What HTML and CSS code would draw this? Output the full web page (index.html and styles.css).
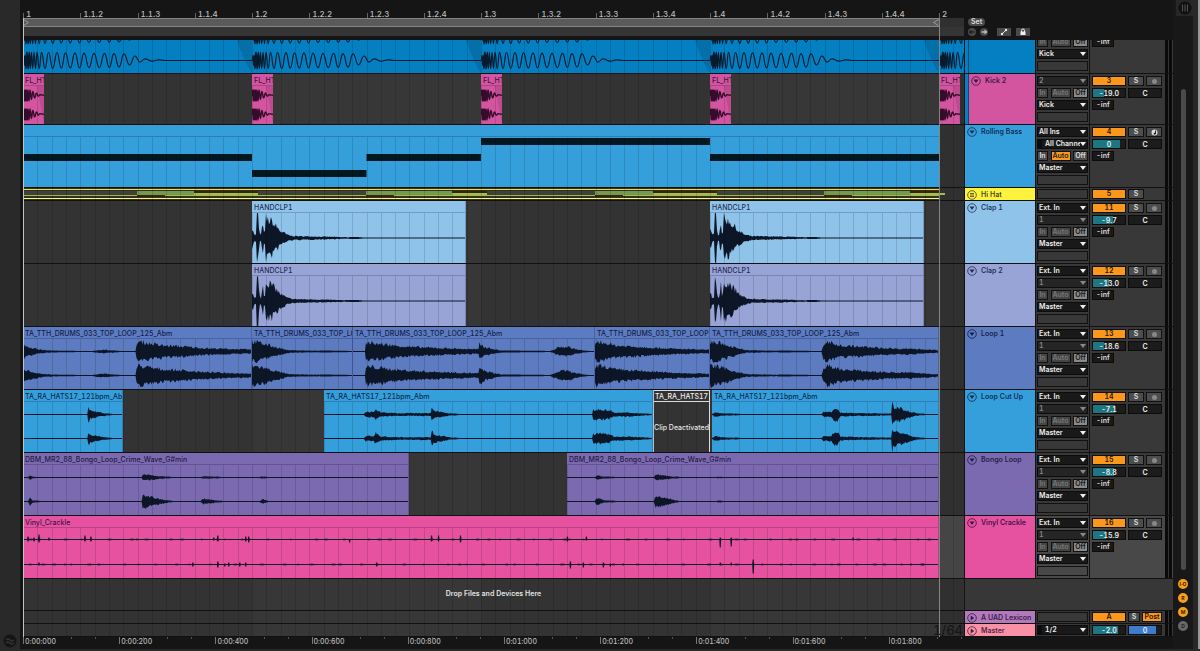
FILE: index.html
```html
<!DOCTYPE html>
<html lang="en">
<head>
<meta charset="utf-8">
<title>Arrangement View</title>
<link rel="stylesheet" href="styles.css">
</head>
<body>
<div class="app">
  <aside class="rail">
    <button class="rail-btn" aria-label="Show overview">
      <svg viewBox="0 0 14 14"><circle cx="7" cy="7" r="6.5" fill="#151515"/><path d="M3 6q2-2 4 0t4 0M3 9q2-2 4 0t4 0" fill="none" stroke="#333" stroke-width="1.2"/></svg>
    </button>
  </aside>

  <main class="arrange">
    <header class="top">
      <div class="top-time">
        <div class="bars" id="bars"></div>
        <div class="loop">
          <div class="loop-brace">
            <svg viewBox="0 0 6 7"><path d="M.5.5 5.500 3.500.5 6.500" fill="none" stroke="#999"/></svg>
            <svg viewBox="0 0 6 7"><path d="M5.500.5.5 3.500 5.500 6.500" fill="none" stroke="#999"/></svg>
          </div>
        </div>
        <div class="scrub"></div>
      </div>
      <div class="locators">
        <button class="set">Set</button>
        <div class="locator-row">
          <button class="round" aria-label="Previous locator"><svg viewBox="0 0 8 8"><circle cx="4" cy="4" r="4" fill="#4a4a4a"/><path d="M6.500 4h-5M3.500 2l-2 2 2 2" fill="none" stroke="#111"/></svg></button>
          <button class="round" aria-label="Next locator"><svg viewBox="0 0 8 8"><circle cx="4" cy="4" r="4" fill="#4a4a4a"/><path d="M1.500 4h5M4.500 2l2 2-2 2" fill="none" stroke="#eee"/></svg></button>
          <button class="flat" aria-label="Automation mode"><svg viewBox="0 0 14 8"><path d="M5 6 9 2" stroke="#eee"/><circle cx="5" cy="6" r="1.200" fill="#eee"/><circle cx="9" cy="2" r="1.200" fill="#eee"/></svg></button>
          <button class="flat" aria-label="Lock envelopes"><svg viewBox="0 0 14 8"><rect x="4.500" y="3.500" width="5" height="3.500" fill="#eee"/><path d="M5.500 4V2.500a1.500 1.500 0 0 1 3 0V4" fill="none" stroke="#eee"/></svg></button>
        </div>
      </div>
    </header>
    <section class="tracks" id="tracks" aria-label="Tracks"></section>
    <footer class="times" id="times"></footer>
    <div class="markers"><i class="marker start"></i><i class="marker end"></i><b class="grid-size">1/64</b></div>
  </main>

  <aside class="gutter">
    <button class="corner" aria-label="Session view"><svg viewBox="0 0 14 14"><circle cx="7" cy="7" r="6.500" fill="#111"/><path d="M4.500 3.500v7M7 3.500v7M9.500 3.500v7" stroke="#555"/></svg></button>
    <div class="scroll"></div>
    <button class="dot">I·O</button>
    <button class="dot">R</button>
    <button class="dot">M</button>
    <button class="dot off">D</button>
  </aside>
  <div class="bezel"></div>
</div>
<script src="app.js"></script>
</body>
</html>
```

FILE: styles.css
```css
:root {
  --beat: 24.336%;
  --step: 1.521%;
  --line: #111;
  --panel: #383838;
  --orange: #fb981c;
  --side: 209px;
}
* { box-sizing: border-box; }
body {
  margin: 0;
  background: #151515;
  color: #ddd;
  font: 600 7px/9px Inter, "Liberation Sans", sans-serif;
  font-variant-numeric: tabular-nums;
}
button, input, select { font: inherit; font-variant-numeric: inherit; color: inherit; margin: 0; padding: 0; border: 0; border-radius: 0; }
svg { display: block; }

.app {
  display: grid;
  grid-template-columns: 20px minmax(0, 1fr) 20px 7px;
  min-height: 100vh;
  border-bottom: 2px solid #292929;
}
.rail { background: #292929; display: flex; align-items: flex-end; padding: 0 3px 1px; }
.rail-btn { width: 14px; height: 14px; background: none; }
.bezel { background: #282828; border-right: 2px solid #999; }
.arrange { position: relative; padding-left: 3px; }

/* Header */
.top { display: grid; grid-template-columns: minmax(0, 1fr) var(--side); height: 40px; }
.bars { display: flex; height: 18px; padding-top: 9px; overflow: hidden; color: #bbb; font-size: 8px; font-weight: 500; line-height: 10px; }
.bars span {
  flex: none;
  width: calc(var(--beat) / 4);
  padding-left: 3px;
  background: linear-gradient(#666, #666) 0 100% / 1px 5px no-repeat;
}
.loop { height: 9px; background: #303030; }
.loop-brace {
  width: calc(var(--beat) * 4);
  height: 9px;
  display: flex;
  justify-content: space-between;
  background: #5a5a5a;
  border: solid #858585;
  border-width: 1px 0;
}
.loop-brace svg { width: 6px; height: 7px; }
.scrub { height: 9px; background: #353535; }
.locators { padding: 18px 0 0 4px; display: flex; flex-direction: column; align-items: flex-start; gap: 1px; }
.set { height: 8px; line-height: 8px; padding: 0 3px; border-radius: 4px; background: #4c4c4c; color: #ddd; }
.locator-row { display: flex; gap: 4px; align-items: center; height: 10px; }
.round { width: 8px; height: 8px; background: none; }
.flat { width: 14px; height: 8px; background: #4a4a4a; margin-left: 1px; }
.round + .flat { margin-left: 5px; }

/* Track rows */
.track {
  display: grid;
  grid-template-columns: minmax(0, 1fr) 70px 53px 83px;
  column-gap: 1px;
  height: 63px;
  border-bottom: 1px solid var(--line);
  background: var(--line);
  overflow: hidden;
}
.track.h-clipped { height: 34px; }
.track.h-mid { height: 51px; }
.track.h-thin { height: 13px; }
.drop { display: grid; grid-template-columns: minmax(0, 1fr) 208px; column-gap: 1px; height: 32px; border-bottom: 1px solid var(--line); }
.drop-side { background: #373737; }
.lane {
  position: relative;
  overflow: hidden;
  background: linear-gradient(90deg, #333 0 var(--beat), #373737 0 calc(var(--beat) * 2), #333 0 calc(var(--beat) * 3), #373737 0 calc(var(--beat) * 4), #303030 0);
}
.lane::after {
  content: "";
  position: absolute;
  inset: 0;
  z-index: 1;
  pointer-events: none;
  background: repeating-linear-gradient(90deg, rgba(0, 0, 0, .14) 0 1px, transparent 1px var(--step));
}
.selected .lane { background: #454545; }
.drop .lane { display: grid; place-items: center; padding-bottom: 2px; color: #e4e4e4; }

/* Clips */
.clip {
  position: absolute;
  top: 0;
  bottom: 0;
  left: calc(var(--x) / 941 * 100%);
  width: calc(var(--w) / 941 * 100%);
  display: flex;
  flex-direction: column;
  overflow: hidden;
  background: var(--color);
  border-right: 1px solid rgba(0, 0, 60, .2);
}
.clip-title {
  position: relative;
  z-index: 2;
  flex: none;
  height: 12px;
  line-height: 13px;
  padding-left: 2px;
  overflow: hidden;
  white-space: nowrap;
  font-weight: 500;
  color: rgba(0, 0, 30, .78);
  background: var(--color);
  border-bottom: 1px solid rgba(0, 0, 50, .2);
}
.wave { flex: 1; width: 100%; min-height: 0; fill: var(--ink, #0c1626); }
.bare .clip, .notes .clip { border: 0; }
.hats .clip { background: none; }
.clip.deactivated { background: #333; border: 1px solid #ddd; border-bottom: 0; }
.deactivated .clip-title { background: #333; color: #eee; border-color: #ddd; height: 11px; line-height: 11px; padding-left: 1px; }
.deactivated p { position: relative; z-index: 2; margin: auto -3px; text-align: center; white-space: nowrap; font-weight: 500; color: #e4e4e4; }

/* Track header */
.head { display: flex; align-items: flex-start; gap: 4px; padding: 1px 0 0 2px; background: var(--color); color: rgba(0, 0, 30, .75); white-space: nowrap; overflow: hidden; }
.head .name { line-height: 11px; }
.nested .head { border-left: 3px solid #0480c2; box-shadow: inset 1px 0 #0a4a75; padding-left: 3px; }
.fold { width: 10px; height: 11px; background: none; }
.fold svg { width: 10px; height: 10px; fill: none; stroke: currentColor; }
.fold .solid { fill: currentColor; stroke: none; }

/* Routing and mixer */
.io, .mix { background: var(--panel); padding: 2px 1px; display: flex; flex-direction: column; gap: 2px; overflow: hidden; }
.selected .io, .selected .mix { background: #484848; }
.h-clipped .io, .h-clipped .mix-cols { justify-content: flex-end; }
.h-thin .io { padding: 1px; }
.pick { display: block; position: relative; flex: none; height: 10px; background: #191919; border: 1px solid #0c0c0c; }
.pick select { display: block; width: 100%; height: 8px; line-height: 8px; padding: 0 7px 0 1px; appearance: none; background: none; outline: none; color: #eee; overflow: hidden; }
.pick::after { content: ""; position: absolute; right: 1px; top: 2px; border: solid transparent; border-width: 4px 3px 0; border-top-color: #eee; }
.pick.dim { background: #252525; }
.pick.dim select { color: #888; }
.pick.dim::after { border-top-color: #888; }
.pick.indent { border-left-width: 5px; }
.pick.indent select { padding-left: 3px; }
.slot { flex: none; height: 10px; border: 1px solid var(--line); }
.monitor { flex: none; display: grid; grid-template-columns: 11px 20px 15px; justify-content: space-between; height: 10px; }
.monitor button, .mix button { height: 10px; line-height: 8px; border: 1px solid var(--line); background: #4d4d4d; color: #ddd; text-align: center; overflow: hidden; white-space: nowrap; }
.monitor.dim button { background: #454545; color: #777; }
.monitor.dim .off { background: #8a8a8a; color: #151515; }
.monitor .on, .monitor.dim .on { background: var(--orange); color: #222; }
.mix { flex-direction: row; justify-content: space-between; padding: 0 1px 0 2px; }
.mix-cols { display: flex; flex-direction: column; gap: 2px; padding-top: 2px; }
.h-thin .mix-cols { padding-top: 1px; }
.mix-row { flex: none; display: grid; grid-template-columns: 34px 16px 16px; column-gap: 2px; height: 10px; }
.mix-row.return { grid-template-columns: 34px 12px 20px; }
.mix .num, .mix .post { background: var(--orange); color: #1a1206; }
.mix .rec { display: grid; place-items: center; color: #888; }
.rec svg { width: 7px; height: 7px; }
.value { height: 10px; width: 100%; border: 1px solid #0c0c0c; text-align: center; color: #eee; background: linear-gradient(90deg, var(--tint, #1f7683) var(--fill, 0%), #1c1c1c 0); outline: none; }
.value.pan { grid-column: span 2; }
.value.blue { --tint: #3e7ccb; }
.peak { flex: none; width: 22px; height: 10px; line-height: 8px; border: 1px solid #0c0c0c; background: #191919; text-align: center; color: #ddd; }
.h-clipped .mix-cols { padding-bottom: 26px; }
.meter { width: 7px; border-left: 3px solid #0a0a0a; border-right: 3px solid #0a0a0a; background: #333; }

/* Time ruler */
.times { display: flex; height: 12px; width: calc(100% - var(--side)); overflow: hidden; color: #bbb; }
.times span {
  flex: none;
  width: 10.223%;
  padding-left: 2px;
  line-height: 10px;
  font-weight: 500;
  background:
    linear-gradient(#777, #777) 0 0 / 1px 7px no-repeat,
    repeating-linear-gradient(90deg, #555 0 1px, transparent 1px 25%) 0 0 / 100% 2px no-repeat;
}
.markers { position: absolute; top: 18px; left: 3px; right: var(--side); height: 619px; pointer-events: none; z-index: 3; }
.marker { position: absolute; top: 0; bottom: 0; width: 1px; background: #b9c4c8; }
.marker.start { left: 0; }
.marker.end { left: calc(var(--beat) * 4); background: #858585; }
.grid-size { position: absolute; right: 1px; bottom: 0; font-size: 13px; line-height: 14px; font-weight: 500; color: #161616; }

/* Right gutter */
.gutter { display: flex; flex-direction: column; align-items: center; gap: 3px; background: #181818; padding-bottom: 17px; }
.corner { align-self: flex-end; width: 17px; height: 16px; padding: 0 2px; background: #272727; }
.corner svg { width: 14px; height: 14px; }
.scroll { width: 5px; flex: 1; margin: 70px 0 6px; border-radius: 3px; background: #4a4a4a; }
.dot { width: 10px; height: 10px; margin-bottom: 1px; border-radius: 5px; background: #f9a01b; color: #332000; font-size: 5px; line-height: 10px; font-weight: 700; text-align: center; }
.dot.off { background: #686868; color: #222; }
```

FILE: app.js
```js
// Timeline units: 941 wide in total, one beat is 229 units.
const BEAT = 229;

let seed = 7;
function rand() {
  seed = (seed * 16807) % 2147483647;
  return seed / 2147483647;
}

// Amplitude of an envelope [[x, amp], ...] at position x.
function ampAt(env, x) {
  for (let i = 1; i < env.length; i++) {
    if (x <= env[i][0]) {
      const [x0, a0] = env[i - 1], [x1, a1] = env[i];
      return a0 + (a1 - a0) * (x - x0) / (x1 - x0 || 1);
    }
  }
  return env[env.length - 1][1];
}

function shape(env, cy, width) {
  const up = [], down = [];
  for (let x = 0; x <= width; x += 1) {
    const a = ampAt(env, x);
    const noisy = v => Math.max(0.5, v > 1 ? v * (0.58 + 0.4 * Math.pow(rand(), 1.6)) : v);
    up.push(`${x} ${(cy - noisy(a)).toFixed(1)}`);
    down.unshift(`${x} ${(cy + noisy(a)).toFixed(1)}`);
  }
  return `<path d="M${up.join("L")}L${down.join("L")}Z"/>`;
}

function svg(width, height, body) {
  return `<svg class="wave" viewBox="0 0 ${width} ${height}" preserveAspectRatio="none" aria-hidden="true">${body}</svg>`;
}

function clip(x, w, title, body) {
  const head = title ? `<div class="clip-title">${title}</div>` : "";
  return `<div class="clip" style="--x:${x};--w:${w}">${head}${body}</div>`;
}

function stereo(x, w, title, env, lower) {
  return clip(x, w, title, svg(w, 50, shape(env, 12.5, w) + shape(lower || env, 36.5, w)));
}

// Oscillating line through alternating peaks.
function swing(peaks, amp, cy, end) {
  let d = `M0 ${cy}`, px = 0, py = cy;
  const go = (x, y) => {
    const m = (px + x) / 2;
    d += `C${m} ${py} ${m} ${y} ${x} ${y}`;
    px = x; py = y;
  };
  peaks.forEach((p, i) => {
    const a = amp(p);
    if (i) go((peaks[i - 1] + p) / 2, cy + a);
    go(p, cy - a);
  });
  go(px + 6, cy);
  return d + `H${end}`;
}

function kick(x, w) {
  const peaks = [1, 2.2, 3.4, 4.8, 6.4, 8.4, 11, 14, 18.5, 25.5, 34, 42.5, 52, 61, 71, 81.5, 91, 101, 112, 122, 136];
  const amp = p => p < 3 ? 5 : p < 106 ? 8.4 - p / 60 : p < 115 ? 4.5 : p < 125 ? 1.6 : .6;
  const line = cy => `<path d="${swing(peaks, amp, cy, BEAT)}" fill="none" stroke="#061c2e" stroke-width="1.2"/>`;
  const fade = `<path d="M214 0H229V33Q222 24 214 0Z" fill="#056fa9"/>`;
  return clip(x, w, "", svg(w, 33, fade + line(-4.5) + line(20.5)));
}

function kick2(x) {
  const peaks = [.8, 1.8, 2.8, 3.8, 5, 7, 9.8, 13.5, 17];
  const amp = p => p < 8 ? 5.5 : p < 11 ? 4 : p < 14 ? 2.5 : .7;
  const line = cy => `<path d="${swing(peaks, amp, cy, 21)}" fill="none" stroke="#350c2c" stroke-width="1.4"/>`;
  return clip(x, 21, "FL_HTH", svg(21, 38, `<path d="M14 0h7v38z" fill="#c04a90"/>` + line(9.5) + line(28.5)));
}

function bass() {
  const notes = [[0, 1, 17], [1, .5, 33], [1.5, .5, 17], [2, 1, 1], [3, 1, 17]];
  return clip(0, 916, "&nbsp;", svg(916, 50, notes.map(([s, l, y]) =>
    `<rect x="${s * BEAT}" y="${y}" width="${l * BEAT}" height="7" fill="#02171f"/>`).join("")));
}

function hats() {
  let s = `<path d="M0 0h916v12H0z" fill="#33321f"/><path d="M0 3h916v4H0z" fill="#40403a"/>
    <path d="M0 1h916v1H0z" fill="#eadb5c"/><path d="M0 7h916v1H0z" fill="#9fb94c"/><path d="M0 10h916v1H0z" fill="#fbf48a"/>`;
  [[114, 57], [343, 86], [572, 58], [801, 86]].forEach(([x, w], i) => {
    const tail = [235, 464, 694, 922][i];
    s += `<rect x="${x}" y="3" width="${w}" height="4" fill="#739a50"/>
      <rect x="${x + w}" y="3" width="${Math.min(916, tail) - x - w}" height="2" fill="#3b2509"/>
      <rect x="${x + w}" y="5" width="${tail - x - w}" height="2" fill="#a5bd50"/>
      <rect x="${x}" y="7" width="28" height="2" fill="#3b2509"/>`;
  });
  return clip(0, 941, "", svg(941, 12, s));
}

const CLAP = [[0, 12], [1.4, 12], [2.2, 3], [4, 5], [4.6, 32], [6, 30], [7.500, 6], [9.5, 4], [10.8, 24], [12, 7], [13.2, 9], [14, 26], [17, 23], [20, 22], [22, 18], [25, 15], [28, 10], [31, 7.5], [36, 4], [42, 2.5], [55, 2.2], [75, 1.7], [92, 1.1], [110, .8], [112, .5], [214, .5]];
const clap = x => clip(x, 214, "HANDCLP1", svg(214, 50, shape(CLAP, 25, 214)));

const LOOP = "TA_TTH_DRUMS_033_TOP_LOOP_125_Abm";
const HATS = "TA_RA_HATS17_121bpm_Abm";
const BONGO = "DBM_MR2_88_Bongo_Loop_Crime_Wave_G#min";

function loops() {
  const hit = [[0, 13], [6, 12], [13, 10], [20, 7], [30, 4], [36, 1.8], [60, 1.1]];
  return stereo(0, 229, LOOP, [[0, 9], [3, 7], [10, 4.5], [20, 2], [35, .8], [70, .5], [77, 2.2], [85, 2], [97, .6], [113, .5], [114, 10], [116, 13], [125, 11], [140, 8], [163, 6.5], [180, 4.5], [228, 2.6]])
    + stereo(229, 101, LOOP, [...hit, [101, .6]])
    + stereo(330, 242, LOOP, [[0, .5], [12, .5], [13, 10], [15, 12], [27, 10], [40, 8], [60, 6], [78, 5], [100, 4], [126, 2.8], [127, 11], [132, 6], [142, 3], [150, 1], [198, .6], [208, 6], [216, 6], [224, 3], [234, .7], [242, .5]])
    + stereo(572, 115, LOOP, [[0, 11], [3, 13], [12, 11], [20, 8], [40, 6.5], [60, 5], [80, 3.6], [114, 2.2]])
    + stereo(687, 229, LOOP, [...hit, [112, .5], [114, 9], [117, 13], [130, 8], [160, 5.5], [190, 3.6], [200, 4], [228, 1.8]]);
}

function cutUps() {
  return stereo(0, 100, HATS, [[0, .5], [65, .5], [66, 9], [68, 5], [76, 3], [84, 1.5], [90, .5]])
    + stereo(301, 329, HATS, [[0, .5], [40, .5], [42, 3.5], [50, 3.5], [52, 7], [57, 2.5], [75, 1.8], [107, 1.8], [108, 10], [111, 5], [120, 3], [126, 1.5], [135, .6], [269, .5], [270, 6], [277, 6.500], [286, 5.5], [291, 2.4], [306, 2.4], [320, 1.4], [329, .5]])
    + `<div class="clip deactivated" style="--x:630;--w:57"><div class="clip-title">TA_RA_HATS17</div><p>Clip Deactivated</p></div>`
    + stereo(689, 227, HATS, [[0, .5], [3, 2.5], [5, 3], [8, 1.8], [20, 1.2], [30, .5], [110, .5], [112, 3], [120, 3.5], [123, 9], [126, 8], [129, 2.4], [150, 1.8], [178, 1.2], [180, 1.2], [181, 15], [183, 9], [192, 7], [198, 4], [205, 1.8], [215, .5]]);
}

function bongos() {
  return stereo(0, 386, BONGO,
    [[0, .5], [5, .5], [7, 2.8], [10, .8], [15, .5], [119, .5], [120, 4], [128, 3.5], [136, 1.8], [150, .5], [178, .5], [182, 1.8], [200, .5], [237, .5], [240, 1.2], [246, .5]],
    [[0, .5], [5, .5], [7, 5], [10, 1.4], [18, .5], [119, .5], [120, 9], [128, 6], [136, 3.5], [150, .5], [178, .5], [181, 3.6], [200, .6], [237, .5], [240, 3], [246, .5]])
    + stereo(544, 372, BONGO,
    [[0, .5], [28, .5], [30, 3], [36, 1.2], [50, .5], [87, .5], [89, 3.8], [98, 2.4], [114, .5], [150, .5], [152, 1.2], [156, .5]],
    [[0, .5], [28, .5], [30, 5], [36, 1.8], [50, .5], [87, .5], [89, 7.500], [98, 5], [112, .6], [150, .5], [152, 1.6], [156, .5]]);
}

function crackle() {
  const top = [[5, 3, 2], [11, 2, 2], [16, 5, 3], [26, 2, 1], [62, 4, 2], [68, 3, 2], [191, 2, 1], [195, 4, 2], [223, 3, 2], [226, 3, 3], [327, 0, 3], [409, 4, 2], [416, 4, 2], [438, 4, 3], [545, 3, 2], [564, 3, 1], [698, 2, 8], [709, 2, 7], [831, 2, 1]];
  const low = [[16, 2, 1], [170, 2, 2], [195, 3, 3], [202, 1, 2], [206, 2, 2], [217, 2, 2], [223, 2, 2], [354, 2, 2], [548, 3, 4], [561, 2, 3], [581, 2, 3], [588, 1, 2], [601, 1, 1], [698, 2, 1], [709, 2, 1], [731, 5, 9], [889, 1, 1], [901, 1, 1]];
  const line = (cy, spikes) => {
    let s = `<rect y="${cy - .5}" width="916" height="1"/>`;
    for (let x = 6; x < 910; x += 5 + rand() * 22) s += `<rect x="${x.toFixed(1)}" y="${cy - .8}" width="${(1 + rand() * 3).toFixed(1)}" height="1.6"/>`;
    spikes.forEach(([x, u, d]) => { s += `<path d="M${x - 1} ${cy}l.500-${u}h1l.500 ${u}-.500 ${d}h-1z"/>`; });
    return s;
  };
  return clip(0, 916, "Vinyl_Crackle", svg(916, 50, line(11.5, top) + line(36.5, low)));
}

const FOLD = {
  down: `<path class="solid" d="M2.500 3.500h5L5 7z"/>`,
  right: `<path class="solid" d="M3.700 2.500v5L7.200 5z"/>`,
  group: `<path d="M3 3.500h4M3 5h4M3 6.500h4" stroke-width=".8"/>`
};

function head(t) {
  if (!t.name) return `<div class="head"></div>`;
  return `<div class="head"><button class="fold" aria-label="Fold ${t.name}"><svg viewBox="0 0 10 10"><circle cx="5" cy="5" r="4.300" stroke-width=".8"/>${FOLD[t.fold || "down"]}</svg></button><span class="name">${t.name}</span></div>`;
}

const pick = (label, value, cls = "") =>
  `<label class="pick ${cls}"><select aria-label="${label}"><option>${value}</option></select></label>`;

function io(t) {
  const live = t.in === "All Ins";
  let s = "";
  if (t.in) s += pick("Input type", t.in);
  if (t.channel) s += pick("Input channel", t.channel, live ? "indent" : "dim");
  if (t.channel || t.clipped) s += `<div class="monitor ${live ? "" : "dim"}"><button>In</button><button class="${live ? "on" : ""}">Auto</button><button class="off">Off</button></div>`;
  if (t.out) s += pick("Output", t.out, t.master ? "indent" : "");
  if (!t.master) s += `<div class="slot"></div>`;
  return `<div class="io">${s}</div>`;
}

const REC = `<svg viewBox="0 0 7 7"><circle cx="3.500" cy="3.500" r="2.500" fill="currentColor"/></svg>`;
const MIDI = `<svg viewBox="0 0 7 7"><circle cx="3.500" cy="3.500" r="3" fill="#ddd"/><path d="M4.500 1.500v3.500" stroke="#222"/><circle cx="3.600" cy="4.800" r="1" fill="#222"/></svg>`;

function mix(t) {
  let s = "";
  const volume = () => `<input class="value" aria-label="Volume" value="${t.vol}" style="--fill:${t.fill}%">`;
  if (t.master) {
    s = `<div class="mix-row">${volume()}<input class="value pan blue" aria-label="Cue volume" value="0" style="--fill:83%"></div>`;
  } else {
    if (t.num) {
      const last = t.post ? `<button class="post">Post</button>` : t.vol ? `<button class="rec" aria-label="Arm">${t.midi ? MIDI : REC}</button>` : "";
      s += `<div class="mix-row ${t.post ? "return" : ""}"><button class="num">${t.num}</button><button>S</button>${last}</div>`;
    }
    if (t.vol) s += `<div class="mix-row">${volume()}<input class="value pan" aria-label="Pan" value="C"></div>`;
    if (t.vol || t.clipped) s += `<div class="peak">-inf</div>`;
  }
  return `<div class="mix"><div class="mix-cols">${s}</div><div class="meter"></div></div>`;
}

const beats = [0, 1, 2, 3, 4].map(b => b * BEAT);
const tracks = [
  { cls: "h-clipped nested bare", color: "#0480c2", clipped: true, out: "Kick", lane: beats.map(x => kick(x, BEAT)).join("") },
  { cls: "h-mid nested bare", color: "#d4559f", name: "Kick 2", channel: "2", out: "Kick", num: 3, vol: "-19.0", fill: 33, lane: beats.map(kick2).join("") },
  { cls: "notes", color: "#359fdb", name: "Rolling Bass", in: "All Ins", channel: "All Channels", out: "Master", num: 4, vol: "0", fill: 84, midi: true, lane: bass() },
  { cls: "h-thin bare hats", color: "#fdf33c", name: "Hi Hat", fold: "group", num: 5, lane: hats() },
  { color: "#90c3ea", name: "Clap 1", num: 11, vol: "-9.7", fill: 62, lane: clap(229) + clap(687) },
  { color: "#98a4d6", name: "Clap 2", num: 12, vol: "-13.0", fill: 50, lane: clap(229) + clap(687) },
  { color: "#5c7bc0", name: "Loop 1", num: 13, vol: "-18.6", fill: 34, lane: loops() },
  { color: "#359fdb", name: "Loop Cut Up", num: 14, vol: "-7.1", fill: 69, lane: cutUps() },
  { color: "#7c6ab1", name: "Bongo Loop", num: 15, vol: "-8.8", fill: 65, lane: bongos() },
  { cls: "selected", color: "#e6529f", name: "Vinyl Crackle", num: 16, vol: "-15.9", fill: 42, lane: crackle() },
  { drop: true },
  { cls: "h-thin", color: "#b479bb", name: "A UAD Lexicon", fold: "right", num: "A", post: true, lane: "" },
  { cls: "h-thin", color: "#fa90a5", name: "Master", fold: "right", master: true, out: "1/2", vol: "-2.0", fill: 78, lane: "" }
];

document.getElementById("tracks").innerHTML = tracks.map(t => {
  if (t.drop) return `<div class="drop"><div class="lane">Drop Files and Devices Here</div><div class="drop-side"></div></div>`;
  if (t.num > 5 && !t.in) Object.assign(t, { in: "Ext. In", channel: "1", out: "Master" });
  return `<article class="track ${t.cls || ""}" style="--color:${t.color}"><div class="lane">${t.lane}</div>${head(t)}${io(t)}${mix(t)}</article>`;
}).join("");

document.getElementById("bars").innerHTML = Array.from({ length: 17 }, (_, i) => {
  if (i === 16) return "<span>2</span>";
  const beat = Math.floor(i / 4), sub = i % 4;
  return `<span>1${beat || sub ? "." + (beat + 1) : ""}${sub ? "." + (sub + 1) : ""}</span>`;
}).join("");

document.getElementById("times").innerHTML = Array.from({ length: 10 }, (_, i) =>
  `<span>0:0${Math.floor(i / 5)}:${String((i % 5) * 200).padStart(3, "0")}</span>`).join("");
```
